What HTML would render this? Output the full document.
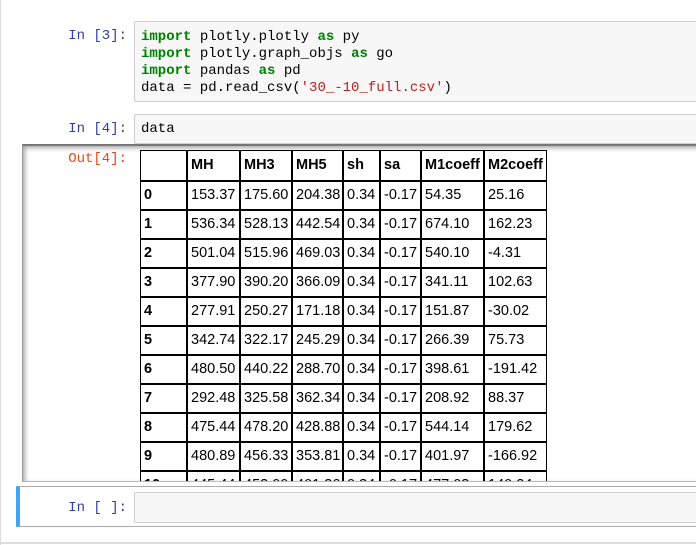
<!DOCTYPE html>
<html><head><meta charset="utf-8"><style>
body{margin:0;width:696px;height:545px;background:#fff;position:relative;overflow:hidden;font-family:"Liberation Mono",monospace;}
.edge{position:absolute;left:0;top:0;width:1px;height:545px;background:#ddd}
.bot{position:absolute;left:0;top:542px;width:696px;height:2px;background:#ddd}
.prompt{position:absolute;right:569px;font-size:14px;color:#303f9f;white-space:pre}
.box{position:absolute;left:134px;width:600px;background:#f7f7f7;border:1px solid #cfcfcf;border-radius:2px}
.code{position:absolute;left:141px;font-size:14px;line-height:17px;color:#000;white-space:pre}
.k{color:#008000;font-weight:bold}.s{color:#ba2121}
.out{position:absolute;left:22px;top:144px;width:700px;height:335px;border-top:2px solid #777;border-left:1px solid #999;border-bottom:1px solid #bbb;box-shadow:inset 2px 2px 5px rgba(0,0,0,.35);overflow:hidden}
table{position:absolute;left:117px;top:4px;border-collapse:separate;border-spacing:0;table-layout:fixed;width:407px;font-family:"Liberation Sans",sans-serif;font-size:14.5px}
td,th{border:1px solid #000;line-height:27px;padding:0 3px;text-align:left;white-space:nowrap;overflow:hidden}
th{font-weight:bold;line-height:29px}
td:first-child{font-weight:bold}
</style></head><body>
<div class="edge"></div>
<div class="prompt" style="top:28px">In [3]:</div>
<div class="box" style="top:21px;height:79px"></div>
<div class="code" style="top:29px"><span class="k">import</span> plotly.plotly <span class="k">as</span> py
<span class="k">import</span> plotly.graph_objs <span class="k">as</span> go
<span class="k">import</span> pandas <span class="k">as</span> pd
data = pd.read_csv(<span class="s">'30_-10_full.csv'</span>)</div>
<div class="prompt" style="top:121px">In [4]:</div>
<div class="box" style="top:114px;height:28px"></div>
<div class="code" style="top:121px">data</div>
<div class="out">
<table>
<colgroup><col style="width:47px"><col style="width:53px"><col style="width:52px"><col style="width:51px"><col style="width:37px"><col style="width:41px"><col style="width:63px"><col style="width:63px"></colgroup>
<tr><th></th><th>MH</th><th>MH3</th><th>MH5</th><th>sh</th><th>sa</th><th>M1coeff</th><th>M2coeff</th></tr>
<tr><td>0</td><td>153.37</td><td>175.60</td><td>204.38</td><td>0.34</td><td>-0.17</td><td>54.35</td><td>25.16</td></tr>
<tr><td>1</td><td>536.34</td><td>528.13</td><td>442.54</td><td>0.34</td><td>-0.17</td><td>674.10</td><td>162.23</td></tr>
<tr><td>2</td><td>501.04</td><td>515.96</td><td>469.03</td><td>0.34</td><td>-0.17</td><td>540.10</td><td>-4.31</td></tr>
<tr><td>3</td><td>377.90</td><td>390.20</td><td>366.09</td><td>0.34</td><td>-0.17</td><td>341.11</td><td>102.63</td></tr>
<tr><td>4</td><td>277.91</td><td>250.27</td><td>171.18</td><td>0.34</td><td>-0.17</td><td>151.87</td><td>-30.02</td></tr>
<tr><td>5</td><td>342.74</td><td>322.17</td><td>245.29</td><td>0.34</td><td>-0.17</td><td>266.39</td><td>75.73</td></tr>
<tr><td>6</td><td>480.50</td><td>440.22</td><td>288.70</td><td>0.34</td><td>-0.17</td><td>398.61</td><td>-191.42</td></tr>
<tr><td>7</td><td>292.48</td><td>325.58</td><td>362.34</td><td>0.34</td><td>-0.17</td><td>208.92</td><td>88.37</td></tr>
<tr><td>8</td><td>475.44</td><td>478.20</td><td>428.88</td><td>0.34</td><td>-0.17</td><td>544.14</td><td>179.62</td></tr>
<tr><td>9</td><td>480.89</td><td>456.33</td><td>353.81</td><td>0.34</td><td>-0.17</td><td>401.97</td><td>-166.92</td></tr>
<tr><td>10</td><td>445.44</td><td>453.00</td><td>401.36</td><td>0.34</td><td>-0.17</td><td>477.03</td><td>140.24</td></tr>
</table>
</div>
<div class="prompt" style="top:151px;color:#e64a19">Out[4]:</div>
<div style="position:absolute;left:16px;top:486px;width:690px;height:41px;border:1px solid #ababab;border-left:4px solid #42a5f5;box-sizing:border-box"></div>
<div class="prompt" style="top:500px">In [ ]:</div>
<div class="box" style="top:492px;height:29px"></div>
<div class="bot"></div>
</body></html>
